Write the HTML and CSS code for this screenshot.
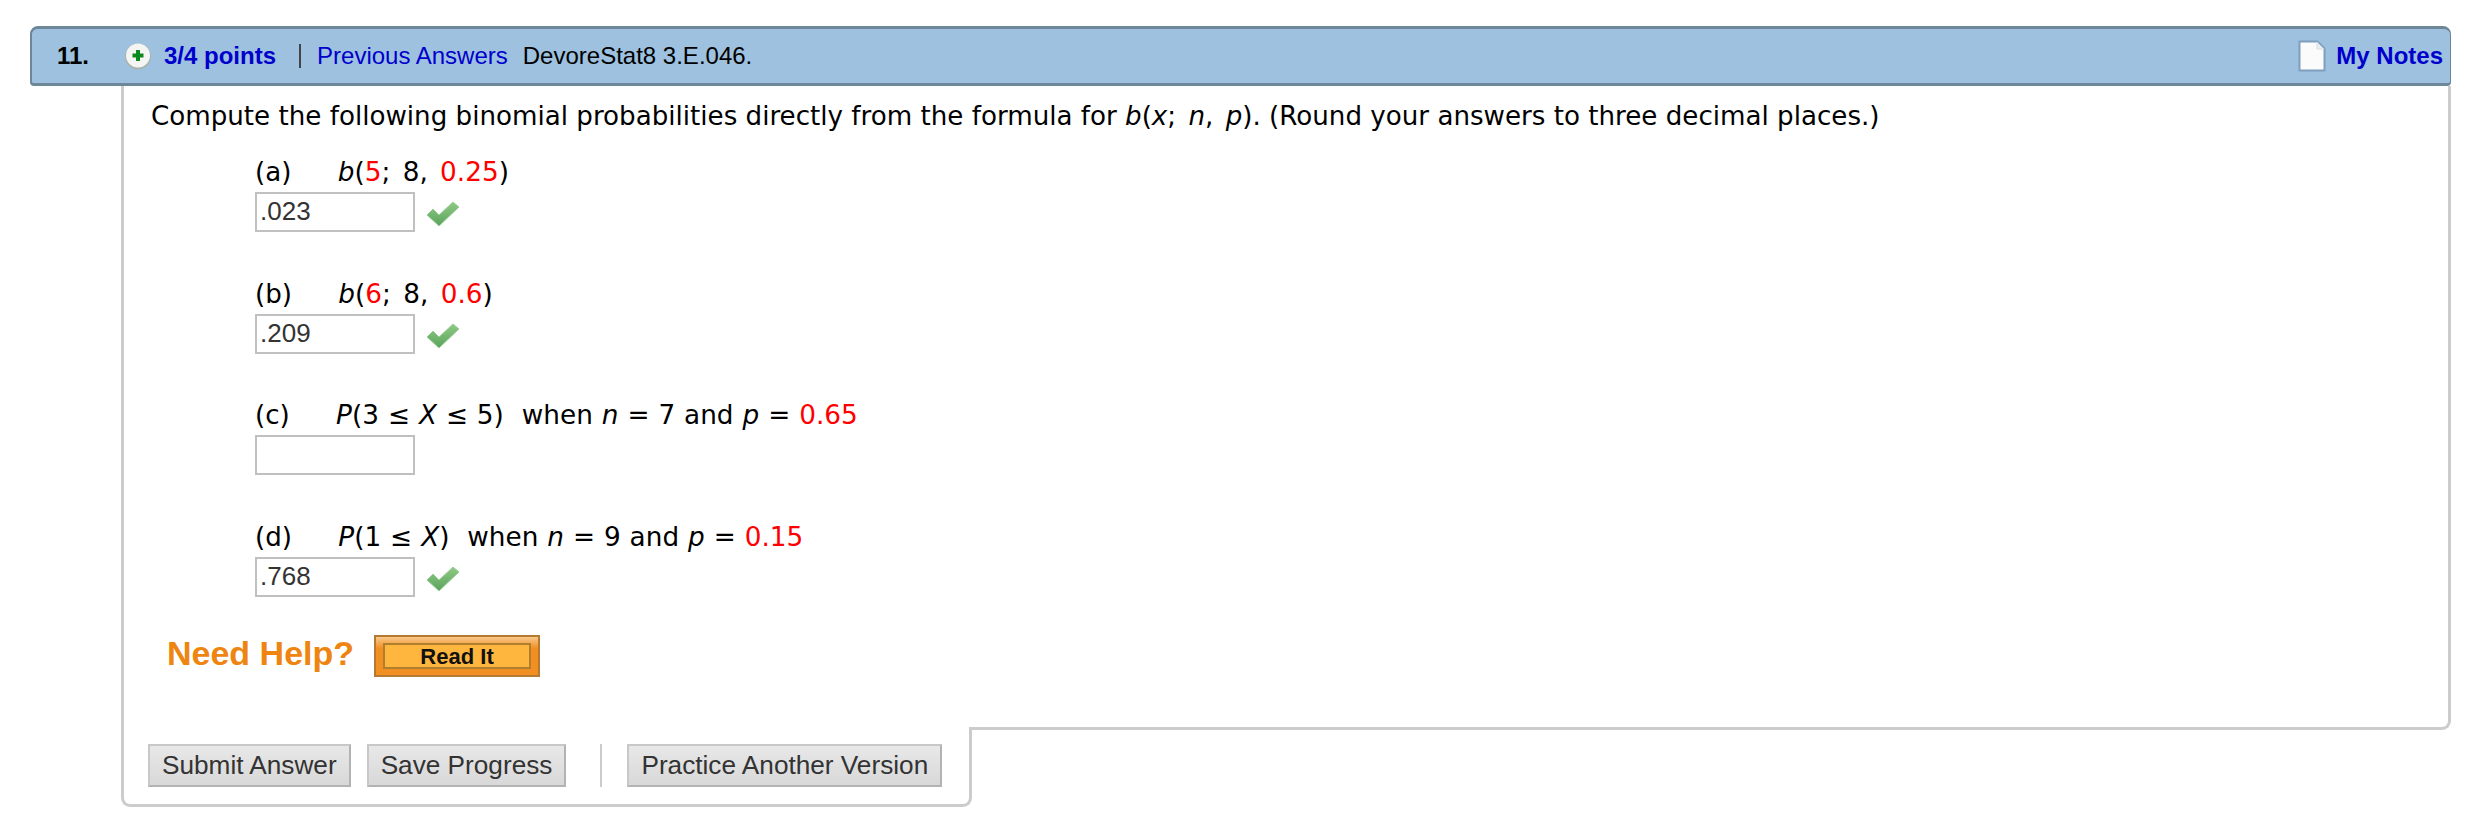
FILE: index.html
```html
<!DOCTYPE html>
<html lang="en">
<head>
    <meta charset="UTF-8">
    <meta name="viewport" content="width=device-width, initial-scale=1.0">
    <title>Question 11</title>
    <link rel="stylesheet" href="styles.css">
</head>
<body>
    <div class="question-header">
        <span class="question-number">11.</span>
        <svg class="plus-icon" width="30" height="30" viewBox="0 0 30 30">
            <circle cx="15" cy="15.5" r="13" fill="#a9b3b0"/>
            <circle cx="15" cy="14.5" r="12" fill="#f4f5f3"/>
            <path d="M15 9v11M9.5 14.5h11" stroke="#0a8a1e" stroke-width="4" fill="none"/>
        </svg>
        <a class="points" href="#">3/4 points</a>
        <span class="pipe"></span>
        <a class="prev-answers" href="#">Previous Answers</a>
        <span class="source">DevoreStat8 3.E.046.</span>
        <span class="notes">
            <svg width="28" height="32" viewBox="0 0 28 32">
                <path d="M1.5 1.5h18l7 7v22h-25z" fill="#fbfbfb" stroke="#7f9fbd" stroke-width="2"/>
                <path d="M19 2v7h7" fill="#eceff2" stroke="#d5dde5" stroke-width="1"/>
            </svg>
            <a href="#">My Notes</a>
        </span>
    </div>

    <div class="panel">
        <p class="prompt">Compute the following binomial probabilities directly from the formula for <span class="args"><i>b</i>(<i>x</i>; <i>n</i>, <i>p</i>)</span>. (Round your answers to three decimal places.)</p>

        <div class="part">
            <div class="part-text">(a) <span class="expr args"><i>b</i>(<span class="red">5</span>; 8, <span class="red">0.25</span>)</span></div>
            <div class="answer">
                <div class="answer-box">.023</div>
                <svg class="check" width="34" height="26" viewBox="0 0 34 26">
                    <defs>
                        <linearGradient id="checkFill" x1="0" y1="0" x2="0" y2="1">
                            <stop offset="0" stop-color="#8fca85"/>
                            <stop offset="1" stop-color="#5aa35c"/>
                        </linearGradient>
                    </defs>
                    <path d="M1 14l6-6 6 6L27 1l6 5-20 19z" fill="url(#checkFill)" stroke="#9ccf98" stroke-width="1"/>
                </svg>
            </div>
        </div>

        <div class="part">
            <div class="part-text">(b) <span class="expr args"><i>b</i>(<span class="red">6</span>; 8, <span class="red">0.6</span>)</span></div>
            <div class="answer">
                <div class="answer-box">.209</div>
                <svg class="check" width="34" height="26" viewBox="0 0 34 26">
                    <path d="M1 14l6-6 6 6L27 1l6 5-20 19z" fill="url(#checkFill)" stroke="#9ccf98" stroke-width="1"/>
                </svg>
            </div>
        </div>

        <div class="part">
            <div class="part-text">(c) <span class="expr"><i>P</i>(3 ≤ <i>X</i> ≤ 5)&nbsp; when <i>n</i> = 7 and <i>p</i> = <span class="red">0.65</span></span></div>
            <div class="answer">
                <div class="answer-box"></div>
            </div>
        </div>

        <div class="part">
            <div class="part-text">(d) <span class="expr"><i>P</i>(1 ≤ <i>X</i>)&nbsp; when <i>n</i> = 9 and <i>p</i> = <span class="red">0.15</span></span></div>
            <div class="answer">
                <div class="answer-box">.768</div>
                <svg class="check" width="34" height="26" viewBox="0 0 34 26">
                    <path d="M1 14l6-6 6 6L27 1l6 5-20 19z" fill="url(#checkFill)" stroke="#9ccf98" stroke-width="1"/>
                </svg>
            </div>
        </div>

        <div class="help">
            <span class="need-help">Need Help?</span>
            <a class="read-it" href="#"><span>Read It</span></a>
        </div>
    </div>

    <div class="actions">
        <button type="button">Submit Answer</button>
        <button type="button">Save Progress</button>
        <span class="divider"></span>
        <button type="button">Practice Another Version</button>
    </div>
</body>
</html>
```

FILE: styles.css
```css
body {
    margin: 0;
    padding: 26px 15px 0 30px;
    background-color: #ffffff;
    font-family: "DejaVu Sans", Verdana, sans-serif;
    color: #000;
}
a {
    text-decoration: none;
}
.question-header {
    display: flex;
    align-items: center;
    height: 60px;
    box-sizing: border-box;
    background-color: #9dc1df;
    border: 3px solid #6d8799;
    border-left-width: 2px;
    border-right-width: 1px;
    border-radius: 8px 8px 4px 4px;
    padding-left: 25px;
    font-family: "Liberation Sans", Arial, sans-serif;
    font-size: 24px;
}
.question-number {
    font-weight: bold;
    width: 66px;
}
.plus-icon {
    margin-right: 11px;
}
.points {
    color: #0000cc;
    font-weight: bold;
}
.pipe {
    width: 2px;
    height: 24px;
    background-color: #444;
    margin: 0 16px 0 23px;
}
.prev-answers {
    color: #0000cc;
}
.source {
    margin-left: 15px;
}
.notes {
    margin-left: auto;
    display: flex;
    align-items: center;
    gap: 10px;
    padding-right: 7px;
}
.notes a {
    color: #0000cc;
    font-weight: bold;
}
.panel {
    margin-left: 91px;
    height: 644px;
    box-sizing: border-box;
    border: 3px solid #cccccc;
    border-top: none;
    border-radius: 0 0 9px 0;
    padding: 12px 0 0 27px;
    font-size: 26.15px;
}
.prompt {
    margin: 0 0 20px;
    line-height: 36px;
}
.part {
    margin-left: 104px;
    height: 121.5px;
}
.part-text {
    line-height: 36px;
}
.expr {
    margin-left: 38px;
    font-size: 26.3px;
    word-spacing: 0.6px;
}
.args {
    word-spacing: 4px;
}
.red {
    color: #ff0000;
}
.answer {
    display: flex;
    align-items: center;
    margin-top: 2px;
}
.answer-box {
    width: 160px;
    height: 40px;
    box-sizing: border-box;
    border: 2px solid #c0c0c0;
    padding-left: 3px;
    font-family: "Liberation Sans", Arial, sans-serif;
    font-size: 26px;
    line-height: 34px;
    color: #333;
}
.check {
    margin: 4px 0 0 11px;
}
.help {
    display: flex;
    align-items: center;
    gap: 20px;
    margin: -5px 0 0 16px;
}
.need-help {
    margin-top: -6px;
    font-family: "Liberation Sans", Arial, sans-serif;
    font-weight: bold;
    font-size: 34px;
    color: #ee8511;
}
.read-it {
    width: 166px;
    height: 42px;
    box-sizing: border-box;
    padding: 6px 7px;
    background: linear-gradient(#f9c88a, #f18f22 30%);
    border: 2px solid #b57a32;
}
.read-it span {
    display: block;
    height: 100%;
    box-sizing: border-box;
    background-color: #feb63f;
    border: 2px solid #b07f2e;
    text-align: center;
    font-family: "Liberation Sans", Arial, sans-serif;
    font-weight: bold;
    font-size: 22px;
    line-height: 24px;
    color: #111;
}
.actions {
    display: flex;
    align-items: center;
    margin: -3px 0 0 91px;
    width: 851px;
    height: 80px;
    box-sizing: border-box;
    position: relative;
    background-color: #fff;
    border: 3px solid #cccccc;
    border-top: none;
    border-radius: 0 0 9px 9px;
    padding: 0 0 1px 24px;
}
button {
    height: 43px;
    padding: 0 12px;
    margin-right: 16px;
    background: linear-gradient(#e8e8e8, #d8d8d8);
    border: 2px solid #b3b3b3;
    border-top-color: #c8c8c8;
    border-left-color: #c8c8c8;
    font-family: "Liberation Sans", Arial, sans-serif;
    font-size: 26.2px;
    color: #333;
}
.divider {
    width: 2px;
    height: 43px;
    background-color: #ccc;
    margin: 0 25px 0 18px;
}
```
